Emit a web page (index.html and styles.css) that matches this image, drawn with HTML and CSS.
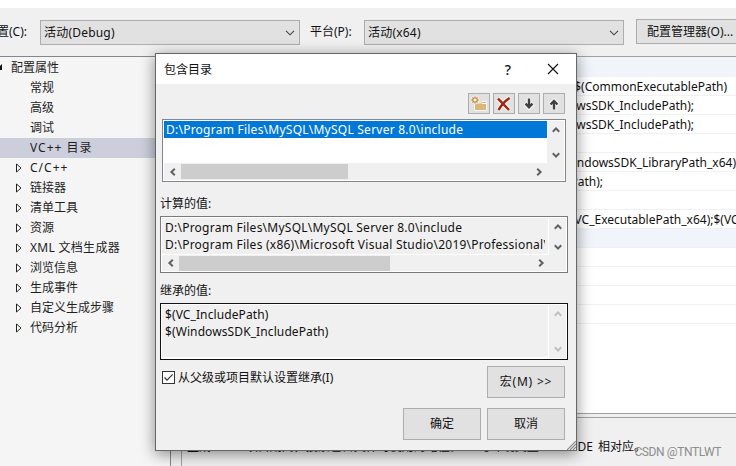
FILE: index.html
```html
<!DOCTYPE html>
<html lang="zh-CN">

<head>
    <meta charset="UTF-8">
    <meta name="viewport" content="width=device-width, initial-scale=1.0">
    <title>包含目录</title>
    <link rel="stylesheet" href="styles.css">
</head>

<body>
    <svg class="defs" width="0" height="0">
        <symbol id="up" viewBox="0 0 8 8"><path d="M.8 5.8 4 2.4l3.2 3.4" fill="none" stroke="currentColor" stroke-width="2" /></symbol>
        <symbol id="down" viewBox="0 0 8 8"><path d="M.8 2.2 4 5.6l3.2-3.4" fill="none" stroke="currentColor" stroke-width="2" /></symbol>
        <symbol id="left" viewBox="0 0 8 8"><path d="M5.8.8 2.4 4l3.4 3.2" fill="none" stroke="currentColor" stroke-width="2" /></symbol>
        <symbol id="right" viewBox="0 0 8 8"><path d="M2.2.8 5.6 4 2.2 7.2" fill="none" stroke="currentColor" stroke-width="2" /></symbol>
        <symbol id="chevron" viewBox="0 0 10 6"><path d="M1 .8l4 4 4-4" fill="none" stroke="#444" stroke-width="1.1" /></symbol>
        <symbol id="expand" viewBox="0 0 6 10"><path d="M.5 1v8L5 5z" fill="#fff" stroke="#222" /></symbol>
    </svg>

    <header class="config-bar">
        <span class="config-label">置(C):</span>
        <div class="combo"><span>活动(Debug)</span><svg width="10" height="6"><use href="#chevron" /></svg></div>
        <span class="platform-label">平台(P):</span>
        <div class="combo"><span>活动(x64)</span><svg width="10" height="6"><use href="#chevron" /></svg></div>
        <button class="button manager">配置管理器(O)...</button>
    </header>

    <main class="content">
        <ul class="tree">
            <li class="root"><svg width="6" height="8"><path d="M2 0v6H-4z" fill="#111" /></svg>配置属性</li>
            <li>常规</li>
            <li>高级</li>
            <li>调试</li>
            <li class="selected"><span class="wide">VC++ 目录</span></li>
            <li><svg width="6" height="10"><use href="#expand" /></svg><span class="wide">C/C++</span></li>
            <li><svg width="6" height="10"><use href="#expand" /></svg>链接器</li>
            <li><svg width="6" height="10"><use href="#expand" /></svg>清单工具</li>
            <li><svg width="6" height="10"><use href="#expand" /></svg>资源</li>
            <li><svg width="6" height="10"><use href="#expand" /></svg><span class="xml">XML 文档生成器</span></li>
            <li><svg width="6" height="10"><use href="#expand" /></svg>浏览信息</li>
            <li><svg width="6" height="10"><use href="#expand" /></svg>生成事件</li>
            <li><svg width="6" height="10"><use href="#expand" /></svg>自定义生成步骤</li>
            <li><svg width="6" height="10"><use href="#expand" /></svg>代码分析</li>
        </ul>

        <section class="panel">
            <div class="grid">
                <div class="row category"></div>
                <div class="row exec">$(CommonExecutablePath)</div>
                <div class="row include">$(WindowsSDK_IncludePath);</div>
                <div class="row include">$(WindowsSDK_IncludePath);</div>
                <div class="row"></div>
                <div class="row library">$(WindowsSDK_LibraryPath_x64)</div>
                <div class="row short">Path);</div>
                <div class="row"></div>
                <div class="row exclude">$(VC_ExecutablePath_x64);$(VC</div>
                <div class="row category"></div>
                <div class="row"></div>
                <div class="row"></div>
                <div class="row"></div>
                <div class="row"></div>
            </div>
            <div class="description"><span>生成 VC++ 项目期间，搜索包含文件时使用的路径。</span><span class="env">与环境变量 INCLUDE <span class="match">相对应。</span></span></div>
        </section>
    </main>

    <div class="dialog">
        <div class="titlebar">
            <span class="title">包含目录</span>
            <span class="help">?</span>
            <svg class="close" width="12" height="12"><path d="M1 1l10 10M11 1 1 11" stroke="#111" stroke-width="1.1" /></svg>
        </div>

        <div class="tools">
            <button class="tool">
                <svg width="18" height="17" viewBox="0 0 18 17">
                    <path d="M4.500 15.500V8h6l1-1.500h5v9z" fill="#dcb67a" stroke="#f6f6f6" />
                    <path d="M11.500 8.500H16" stroke="#fff" />
                    <circle cx="5" cy="5" r="4.400" fill="#f0f0f0" />
                    <path d="M5 1.500v2M5 6.500v2M1.500 5h2M6.500 5h2M2.500 2.500l1.400 1.400M6.100 6.100l1.400 1.400M2.500 7.500l1.400-1.400M6.100 3.900l1.400-1.400" stroke="#c27d1a" stroke-width="1.300" />
                </svg>
            </button>
            <button class="tool">
                <svg width="16" height="16" viewBox="0 0 16 16">
                    <path d="M2 2.700 13 14M13.600 2C9 5 5.500 8.500 2.600 14" fill="none" stroke="#f8f8f8" stroke-width="4.500" />
                    <path d="M2 2.700 13 14M13.600 2C9 5 5.500 8.500 2.600 14" fill="none" stroke="#a1260d" stroke-width="2.500" />
                </svg>
            </button>
            <button class="tool">
                <svg width="16" height="16" viewBox="0 0 16 16">
                    <path d="M8 2v10M4 7.500l4 4 4-4" fill="none" stroke="#f8f8f8" stroke-width="4.500" />
                    <path d="M8 2.500v9M4.500 7.700 8 11.200l3.500-3.500" fill="none" stroke="#424242" stroke-width="2.400" />
                </svg>
            </button>
            <button class="tool">
                <svg width="16" height="16" viewBox="0 0 16 16">
                    <path d="M8 14V5M4 9l4-4 4 4" fill="none" stroke="#f8f8f8" stroke-width="4.500" />
                    <path d="M8 13.500v-9M4.500 8.500 8 5l3.500 3.500" fill="none" stroke="#424242" stroke-width="2.400" />
                </svg>
            </button>
        </div>

        <div class="box paths">
            <div class="view">
                <div class="line active"><span class="path">D:\Program Files\MySQL\MySQL Server 8.0\include</span></div>
            </div>
            <div class="vscroll"><svg width="8" height="8"><use href="#up" /></svg><svg width="8" height="8"><use href="#down" /></svg></div>
            <div class="hscroll"><svg width="8" height="8"><use href="#left" /></svg><div class="thumb"></div><svg width="8" height="8"><use href="#right" /></svg></div>
        </div>

        <div class="box-label">计算的值:</div>
        <div class="box computed">
            <div class="view">
                <div class="line"><span class="path">D:\Program Files\MySQL\MySQL Server 8.0\include</span></div>
                <div class="line"><span class="path">D:\Program Files (x86)\Microsoft Visual Studio\2019\Professional\</span></div>
            </div>
            <div class="vscroll"><svg width="8" height="8"><use href="#up" /></svg><svg width="8" height="8"><use href="#down" /></svg></div>
            <div class="hscroll"><svg width="8" height="8"><use href="#left" /></svg><div class="thumb"></div><svg width="8" height="8"><use href="#right" /></svg></div>
        </div>

        <div class="box-label">继承的值:</div>
        <div class="box inherited">
            <div class="view">
                <div class="line">$(VC_IncludePath)</div>
                <div class="line">$(WindowsSDK_IncludePath)</div>
            </div>
            <div class="vscroll disabled"><svg width="8" height="8"><use href="#up" /></svg><svg width="8" height="8"><use href="#down" /></svg></div>
        </div>

        <div class="options">
            <label class="inherit">
                <svg width="13" height="13"><rect x=".5" y=".5" width="12" height="12" fill="#fff" stroke="#333" /><path d="M2.500 6.500 5 9.200 10.700 3.300" fill="none" stroke="#333" stroke-width="1.200" /></svg>
                <span>从父级或项目默认设置继承(I)</span>
            </label>
            <button class="button macro">宏(M) &gt;&gt;</button>
        </div>
        <div class="actions">
            <button class="button">确定</button>
            <button class="button">取消</button>
        </div>
        <svg class="grip" width="9" height="9"><path d="M0 9 9 0M3 9l6-6M6 9l3-3" stroke="#888" stroke-width="1.200" /></svg>
    </div>

    <div class="watermark">CSDN @TNTLWT</div>
</body>

</html>
```

FILE: styles.css
```css
* {
    box-sizing: border-box;
}

body {
    margin: 0;
    padding-top: 8px;
    width: 736px;
    height: 466px;
    overflow: hidden;
    position: relative;
    background-color: #fff;
    color: #111;
    font-family: "Noto Sans", "Noto Sans CJK SC", sans-serif;
    font-size: 12px;
    line-height: 17px;
    white-space: nowrap;
}

svg {
    display: block;
    flex: none;
}

.defs {
    position: absolute;
}

/* top bar */
.config-bar {
    display: flex;
    align-items: flex-start;
    height: 48px;
    padding-top: 12px;
    background-color: #f0f0f0;
}

.config-label {
    flex: none;
    width: 40px;
    margin-top: 3px;
    text-indent: -3px;
}

.platform-label {
    flex: none;
    width: 64px;
    margin-top: 3px;
    padding-left: 10px;
}

.combo {
    display: flex;
    flex: none;
    justify-content: space-between;
    align-items: center;
    width: 260px;
    height: 25px;
    padding: 0 4px 0 3px;
    border: 1px solid #adadad;
    background-color: #e1e1e1;
    letter-spacing: 0.2px;
}

.button {
    width: 78px;
    height: 32px;
    padding: 0 0 2px;
    border: 1px solid #adadad;
    background-color: #e1e1e1;
    color: #111;
    font: inherit;
}

.macro {
    letter-spacing: 0.8px;
}

.manager {
    flex: none;
    width: 110px;
    height: 25px;
    margin: -1px 0 0 12px;
    padding: 0 0 0 10px;
    text-align: left;
}

/* tree + property grid */
.content {
    display: flex;
    height: 410px;
    background-color: #f0f0f0;
}

.tree {
    width: 171px;
    margin: 0;
    padding: 1px 0 0;
    border-top: 1px solid #828790;
    border-right: 1px solid #828790;
    background-color: #f5f5f5;
    list-style: none;
    color: #1e1e1e;
}

.tree li {
    display: flex;
    align-items: center;
    height: 20px;
    padding: 0 0 1px 30px;
}

.tree li svg {
    margin: 1px 8px 0 -14px;
}

.tree .root {
    padding-left: 11px;
}

.tree .root svg {
    margin: 0 5px 0 -11px;
}

.tree .selected {
    background-color: #cccedb;
}

.wide {
    letter-spacing: 1px;
}

.xml {
    letter-spacing: 0.3px;
}

.panel {
    flex: 1;
    min-width: 0;
    margin-left: 10px;
}

.grid {
    height: 358px;
    border: 1px solid #a0a0a0;
    border-right: 0;
    background-color: #fff;
}

.row {
    height: 19px;
    border-bottom: 1px solid #eef1f6;
    overflow: hidden;
    line-height: 19px;
    text-align: right;
}

.row.category {
    background-color: #f1f5fb;
}

.row.category:first-child {
    height: 20px;
}

.row.exec {
    padding-right: 9px;
}

.row.include {
    padding-right: 42px;
}

.row.short {
    padding-right: 133px;
}

.row.exclude {
    padding-left: 382px;
    text-align: left;
}

.description {
    height: 60px;
    margin-top: 3px;
    padding: 20px 0 0 5px;
    border: 1px solid #a0a0a0;
    border-right: 0;
}

.description .env {
    margin-left: 17px;
}

.description .match {
    margin-left: 2px;
}

/* dialog */
.dialog {
    position: absolute;
    left: 155px;
    top: 53px;
    width: 422px;
    height: 398px;
    border: 1px solid #666;
    background-color: #f0f0f0;
    box-shadow: 0 3px 14px rgba(0, 0, 0, 0.45);
}

.titlebar {
    display: flex;
    align-items: center;
    height: 30px;
    padding: 0 17px 0 8px;
    background-color: #fff;
}

.title {
    flex: 1;
}

.help {
    margin-right: 36px;
    font-size: 14px;
    font-weight: 500;
}

.tools {
    display: flex;
    justify-content: flex-end;
    gap: 3px;
    height: 21px;
    margin: 9px 11px 5px 0;
}

.tool {
    display: flex;
    align-items: center;
    justify-content: center;
    width: 22px;
    padding: 0;
    border: 1px solid #adadad;
    background-color: #e1e1e1;
}

.box {
    display: grid;
    grid-template-columns: 1fr 17px;
    height: 57px;
    width: 408px;
    margin-left: 4px;
    padding: 1px;
    border: 1px solid #7a7a7a;
    background-color: #fff;
}

.view {
    overflow: hidden;
    min-width: 0;
    background-color: #f0f0f0;
}

.line {
    height: 17px;
    padding-left: 3px;
    letter-spacing: 0.1px;
}

.path {
    letter-spacing: 0.24px;
}

.vscroll {
    display: flex;
    flex-direction: column;
    justify-content: space-between;
    align-items: center;
    padding: 5px 0 4px;
    background-color: #f0f0f0;
    color: #606060;
}

.hscroll {
    display: flex;
    align-items: center;
    grid-column: 1 / 3;
    padding-left: 5px;
    background-color: #f0f0f0;
    color: #606060;
}

.thumb {
    height: 15px;
    background-color: #cdcdcd;
}

.hscroll svg:last-child {
    margin: 0 21px 0 auto;
}

.vscroll.disabled {
    padding-bottom: 5px;
    color: #bfbfbf;
}

.paths {
    grid-template-rows: 42px 17px;
    width: 404px;
    height: 63px;
    margin-left: 6px;
    border-color: #828790;
}

.paths .view {
    background-color: #fff;
}

.paths .line {
    width: 383px;
    padding-left: 2px;
}

.active {
    background-color: #0078d7;
    color: #fff;
}

.paths .thumb {
    width: 167px;
    margin-left: 4px;
}

.computed {
    grid-template-rows: 37px 16px;
}

.computed .view,
.inherited .view {
    padding-top: 1px;
    margin: 0 1px 1px 0;
}

.computed .line {
    width: 383px;
    overflow: hidden;
}

.computed .vscroll {
    padding: 5px 0 4px;
}

.computed .thumb {
    width: 211px;
    margin-left: 4px;
}

.inherited {
    border-color: #111;
}

.box-label {
    height: 17px;
    margin: 9px 0 4px 4px;
}

.paths + .box-label {
    margin-top: 13px;
}

.options {
    display: flex;
    justify-content: space-between;
    margin: 6px 11px 10px 6px;
}

.inherit {
    display: flex;
    height: 17px;
    margin-top: 3px;
    align-items: center;
    gap: 3px;
}

.actions {
    display: flex;
    justify-content: flex-end;
    gap: 6px;
    margin-right: 11px;
}

.grip {
    position: absolute;
    right: 0;
    bottom: 0;
}

.watermark {
    position: absolute;
    right: 15px;
    bottom: 5px;
    color: #8d8d8d;
    font-family: Roboto, "Liberation Sans", sans-serif;
    letter-spacing: -0.4px;
}
```
